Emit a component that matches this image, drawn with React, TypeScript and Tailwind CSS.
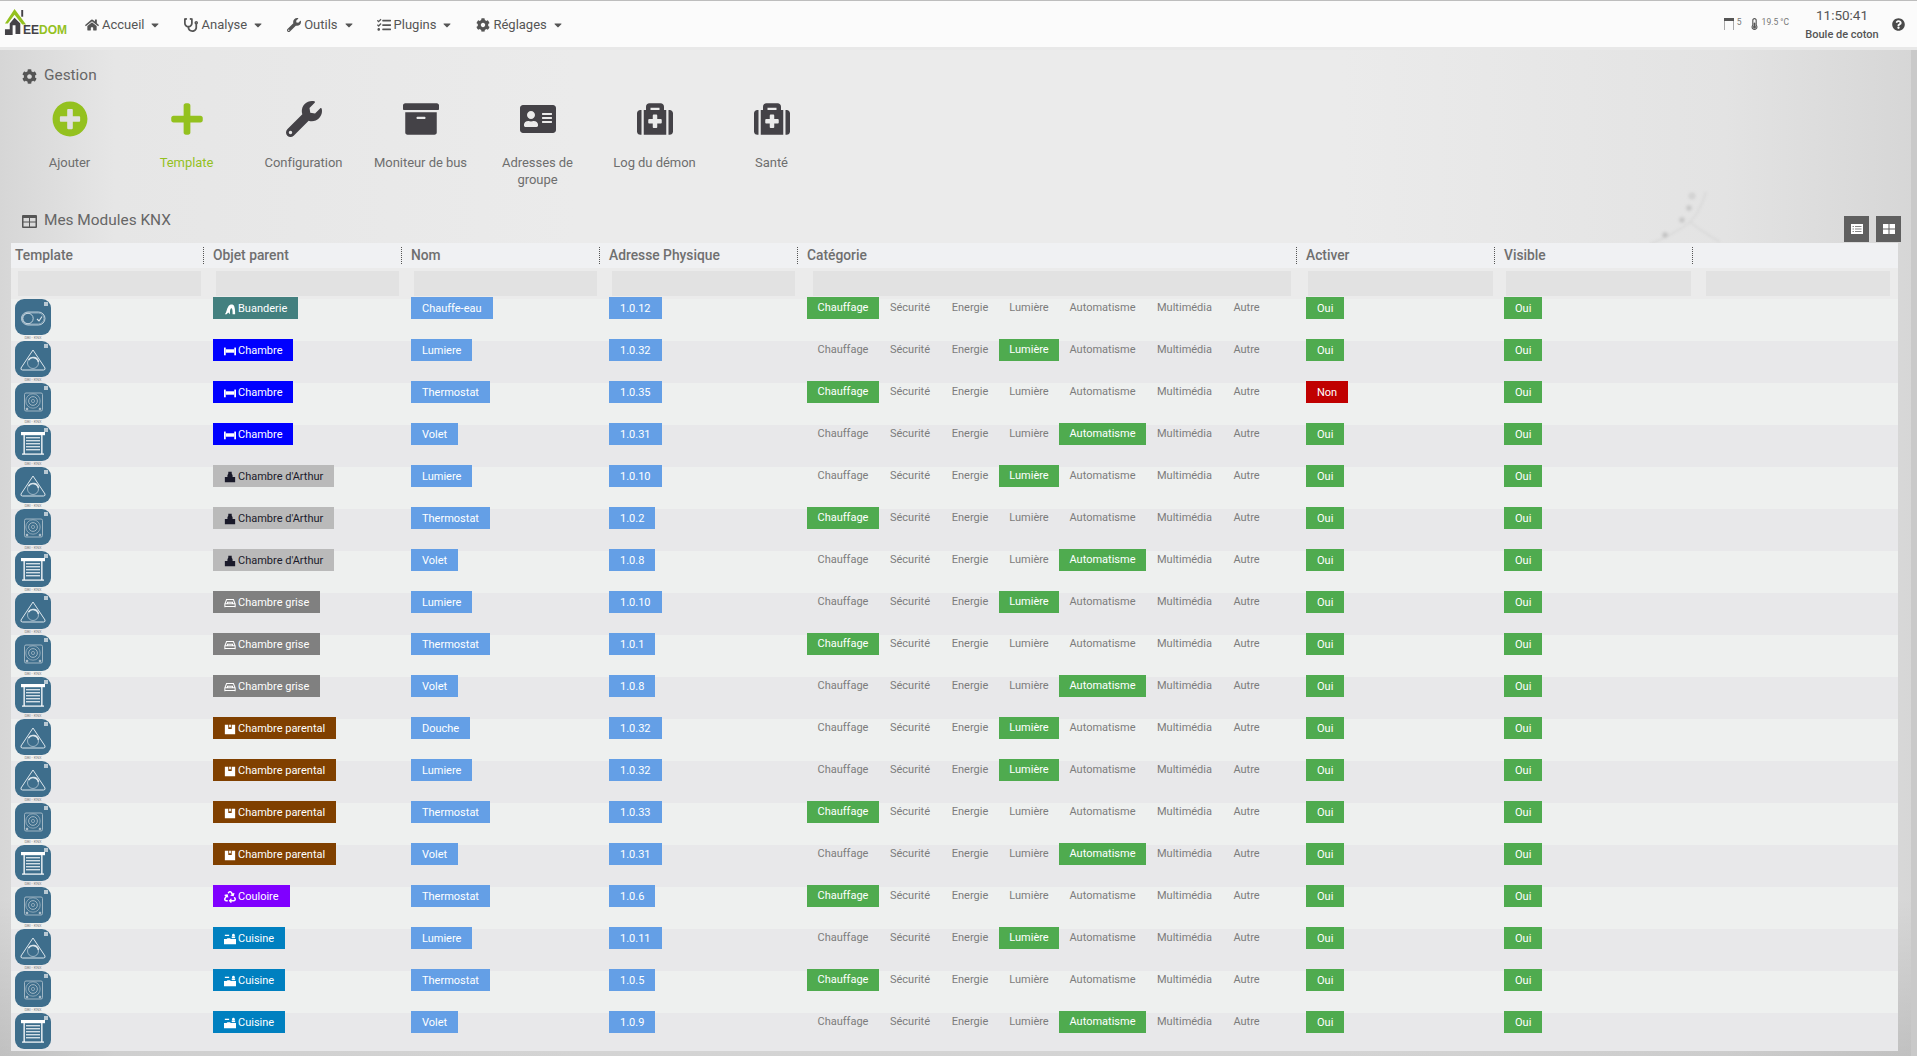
import React from "react";
import {
  FaHome, FaStethoscope, FaWrench, FaTasks, FaCog, FaCaretDown, FaPlusCircle, FaPlus, FaArchive,
  FaAddressCard, FaMedkit, FaQuestionCircle, FaRecycle, FaThermometerHalf,
} from "react-icons/fa";

const NAV = [
  { l: "Accueil", I: FaHome, c: "ml-[20px]" },
  { l: "Analyse", I: FaStethoscope, c: "ml-[24px]" },
  { l: "Outils", I: FaWrench, c: "ml-[24px]" },
  { l: "Plugins", I: FaTasks, c: "ml-[23px]" },
  { l: "Réglages", I: FaCog, c: "ml-[24px]" },
];

const CARDS = [
  { l: "Ajouter", I: FaPlusCircle, c: "text-[#94c11f]" },
  { l: "Template", I: FaPlus, c: "text-[#94c11f]", t: "text-[#94c11f]" },
  { l: "Configuration", I: FaWrench, c: "text-[#444247]" },
  { l: "Moniteur de bus", I: FaArchive, c: "text-[#444247]" },
  { l: "Adresses de groupe", I: FaAddressCard, c: "text-[#444247]" },
  { l: "Log du démon", I: FaMedkit, c: "text-[#444247]" },
  { l: "Santé", I: FaMedkit, c: "text-[#444247]" },
];

const GRID = "grid grid-cols-[198px_198px_198px_198px_499px_198px_198px_200px]";
const COLS = ["Template", "Objet parent", "Nom", "Adresse Physique", "Catégorie", "Activer", "Visible", ""];
const FILTERS = [
  "pl-[7px] pr-[8px]", "pl-[7px] pr-[8px]", "pl-[7px] pr-[8px]", "pl-[7px] pr-[8px]",
  "pl-[10px] pr-[11px]", "pl-[6px] pr-[7px]", "pl-[6px] pr-[7px]", "pl-[8px] pr-[8px]",
];
const CATS = [
  { n: "Chauffage", c: "w-[72px]" },
  { n: "Sécurité", c: "w-[62px]" },
  { n: "Energie", c: "w-[58px]" },
  { n: "Lumière", c: "w-[60px]" },
  { n: "Automatisme", c: "w-[87px]" },
  { n: "Multimédia", c: "w-[77px]" },
  { n: "Autre", c: "w-[47px]" },
];

function BlobWash() {
  return (
    <svg viewBox="0 0 14 14" className="w-[12px] h-[12px]" fill="currentColor">
      <path d="M1 13 C3 11 3 7 5 4 C7 1 11 1 12 4 C13 7 13 10 13 13 L10 13 C10 10 10 7 9 6 C7 6 7 9 7 13 L5 11 L3 13 Z" />
    </svg>
  );
}
function Bar() {
  return (
    <svg viewBox="0 0 14 14" className="w-[12px] h-[12px]" fill="currentColor">
      <rect x="0" y="3" width="2" height="9" />
      <rect x="12" y="3" width="2" height="9" />
      <rect x="2" y="5" width="10" height="4" />
    </svg>
  );
}
function Lock() {
  return (
    <svg viewBox="0 0 14 14" className="w-[12px] h-[12px]" fill="currentColor">
      <path d="M5 1 H9 V3 L10 5 V7 H13 V13 H1 V7 H4 V5 L5 3 Z" />
    </svg>
  );
}
function OutlineBed() {
  return (
    <svg viewBox="0 0 14 14" className="w-[12px] h-[12px]" fill="none" stroke="currentColor" strokeWidth="1.2">
      <path d="M1 12 V8 L3 3 H11 L13 8 V12 M1 8 H13 M1 11 H13 M4 8 V6 H10 V8" />
    </svg>
  );
}
function Parental() {
  return (
    <svg viewBox="0 0 14 14" className="w-[12px] h-[12px]" fill="currentColor">
      <path d="M1 2 H5 V7 H9 V2 H13 V13 H1 Z" />
      <rect x="6" y="2" width="2" height="3" />
    </svg>
  );
}
function Kitchen() {
  return (
    <svg viewBox="0 0 14 14" className="w-[12px] h-[12px]" fill="currentColor">
      <path d="M0 7 L3 7 L4 6 L7 6 L8 7 H14 V13 H0 Z" />
      <rect x="1" y="2" width="5" height="1.5" />
      <circle cx="11" cy="2.5" r="1.6" />
      <rect x="9" y="4" width="4" height="2" />
    </svg>
  );
}

const OBJ: Record<string, { c: string; I: React.ComponentType<any> }> = {
  Buanderie: { c: "bg-[#43807f] text-white", I: BlobWash },
  Chambre: { c: "bg-[#0000ff] text-white", I: Bar },
  "Chambre d'Arthur": { c: "bg-[#bababa] text-[#1a1a2a]", I: Lock },
  "Chambre grise": { c: "bg-[#808080] text-white", I: OutlineBed },
  "Chambre parental": { c: "bg-[#804000] text-white", I: Parental },
  Couloire: { c: "bg-[#8000ff] text-white", I: FaRecycle },
  Cuisine: { c: "bg-[#0080c0] text-white", I: Kitchen },
};

const ROWS: [string, string, string, boolean?][] = [
  ["Buanderie", "Chauffe-eau", "1.0.12"],
  ["Chambre", "Lumiere", "1.0.32"],
  ["Chambre", "Thermostat", "1.0.35", false],
  ["Chambre", "Volet", "1.0.31"],
  ["Chambre d'Arthur", "Lumiere", "1.0.10"],
  ["Chambre d'Arthur", "Thermostat", "1.0.2"],
  ["Chambre d'Arthur", "Volet", "1.0.8"],
  ["Chambre grise", "Lumiere", "1.0.10"],
  ["Chambre grise", "Thermostat", "1.0.1"],
  ["Chambre grise", "Volet", "1.0.8"],
  ["Chambre parental", "Douche", "1.0.32"],
  ["Chambre parental", "Lumiere", "1.0.32"],
  ["Chambre parental", "Thermostat", "1.0.33"],
  ["Chambre parental", "Volet", "1.0.31"],
  ["Couloire", "Thermostat", "1.0.6"],
  ["Cuisine", "Lumiere", "1.0.11"],
  ["Cuisine", "Thermostat", "1.0.5"],
  ["Cuisine", "Volet", "1.0.9"],
];

function catOf(nom: string) {
  if (nom === "Thermostat" || nom === "Chauffe-eau") return "Chauffage";
  if (nom === "Volet") return "Automatisme";
  return "Lumière";
}

function TemplateIcon({ nom, label }: { nom: string; label: boolean }) {
  const s = { fill: "none", stroke: "#dce6ec", strokeWidth: 0.8 };
  return (
    <div className="flex flex-col items-center w-[36px]">
      <div className="relative w-[36px] h-[36px] rounded-[9px] bg-[#3e6e8c]">
        <span className="absolute right-[3px] top-[3px] w-[4px] h-[4px] bg-[#b9c9d3]" />
        <svg viewBox="0 0 36 36" className="w-[36px] h-[36px]">
          {nom === "Chauffe-eau" && (
            <g {...s}>
              <rect x="6.5" y="13" width="23.5" height="13" rx="6.5" />
              <rect x="7.5" y="14" width="21.5" height="11" rx="5.5" strokeWidth="0.5" />
              <circle cx="13" cy="19.5" r="5.2" />
              <path d="M22 20 L24 22 L27 17.5" strokeWidth="1.1" />
            </g>
          )}
          {(nom === "Lumiere" || nom === "Douche") && (
            <g {...s}>
              <path d="M18 9 L30 27 Q30.5 29 28.5 29 H7.5 Q5.5 29 6 27 Z" strokeWidth="1" />
              <circle cx="18" cy="22" r="5.5" strokeWidth="0.6" />
              <path d="M13.5 19 A5.5 5.5 0 0 1 23.5 21" strokeWidth="1.6" />
            </g>
          )}
          {nom === "Thermostat" && (
            <g fill="none" stroke="#a9bcc8" strokeWidth="0.7">
              <rect x="9.5" y="10" width="18" height="18" rx="1.5" strokeWidth="0.9" />
              <circle cx="18" cy="18" r="7.2" />
              <circle cx="18" cy="18" r="4.4" strokeWidth="0.9" />
              <circle cx="18" cy="18" r="1.6" />
              <circle cx="12" cy="26" r="1" fill="#cfd9e0" />
              <circle cx="25" cy="26" r="1" fill="#cfd9e0" />
            </g>
          )}
          {nom === "Volet" && (
            <g fill="#ffffff">
              <rect x="6" y="7" width="24" height="3.2" />
              <rect x="8.5" y="10" width="1.3" height="19" />
              <rect x="26.2" y="10" width="1.3" height="19" />
              <rect x="7" y="28.5" width="22" height="1.2" />
              <rect x="11" y="12" width="14" height="1.4" fill="#d4dfe6" />
              <rect x="11" y="15" width="14" height="1.4" fill="#d4dfe6" />
              <rect x="11" y="18" width="14" height="1.4" fill="#d4dfe6" />
              <rect x="11" y="21" width="14" height="1.4" fill="#d4dfe6" />
              <rect x="11" y="24" width="14" height="1.4" fill="#d4dfe6" />
            </g>
          )}
        </svg>
      </div>
      {label && <span className="text-[4px] leading-[4px] mt-[1px] text-[#888] whitespace-nowrap">DBI - KNX</span>}
    </div>
  );
}

function Badge({ children, className }: { children: React.ReactNode; className: string }) {
  return (
    <span className={`-mt-[2px] pt-[1px] flex items-center h-[22px] px-[11px] text-[11px] font-normal leading-none whitespace-nowrap ${className}`}>
      {children}
    </span>
  );
}

const CELL = "pl-[4px] flex items-start";

export default function App() {
  return (
    <div className="relative h-[1056px] w-[1917px] overflow-hidden font-[family-name:Roboto,sans-serif] text-[#555] bg-[linear-gradient(180deg,transparent_85%,rgba(0,0,0,0.1)_100%),linear-gradient(90deg,#d6d6d6_0%,#e6e6e6_6%,#ebebeb_30%,#ebebeb_70%,#e3e3e3_90%,#d6d6d6_100%)]">
      {/* nav */}
      <header className="h-[50px] border-b-[3px] border-[#e8e8e8] border-t-[1px] border-t-[#bdbdbd] bg-[#fbfbfb] flex items-center">
        <div className="flex items-end self-start mt-[7px] ml-[4px] w-[61px] h-[27px]">
          <svg viewBox="0 0 24 28" className="w-[23px] h-[27px] shrink-0">
            <path d="M1 16 L11 1 L23 17 H19 L11 7 L4 16 Z" fill="#94c11f" />
            <path d="M6 16 L11 10 L17 16 V27 H12 V18 H9 V28 H1 V22 H6 Z" fill="#444247" />
            <rect x="18" y="2" width="2" height="7" fill="#444247" />
          </svg>
          <span className="font-[family-name:'Liberation_Sans',sans-serif] font-bold text-[12px] leading-[10px] -ml-[4px] whitespace-nowrap">
            <span className="text-[#444247]">EE</span>
            <span className="text-[#94c11f]">DOM</span>
          </span>
        </div>
        {NAV.map(({ l, I, c }) => (
          <div key={l} className={`flex items-center mt-[2px] text-[#555] text-[13px] ${c}`}>
            <I className="w-[14px] h-[14px] mr-[3px]" />
            <span>{l}</span>
            <FaCaretDown className="w-[10px] h-[12px] ml-[6px]" />
          </div>
        ))}
        <div className="ml-auto flex items-center">
          <div className="flex items-center mr-[17px]">
            <svg viewBox="0 0 10 12" className="w-[10px] h-[12px]">
              <rect x="0" y="0" width="10" height="3" fill="#555" />
              <rect x="0" y="3" width="1" height="9" fill="#aaa" />
              <rect x="9" y="3" width="1" height="9" fill="#aaa" />
            </svg>
            <span className="text-[8.5px] leading-none ml-[3px] -mt-[4px] text-[#777]">5</span>
            <FaThermometerHalf className="w-[9px] h-[12px] ml-[8px] text-[#555]" />
            <span className="text-[8.5px] leading-none ml-[3px] -mt-[4px] text-[#777] whitespace-nowrap">19.5 °C</span>
          </div>
          <div className="flex flex-col items-center w-[72px]">
            <span className="text-[13.5px] leading-[18px] text-[#555]">11:50:41</span>
            <span className="text-[11px] leading-[16px] mt-[3px] font-medium text-[#555] whitespace-nowrap">Boule de coton</span>
          </div>
          <FaQuestionCircle className="w-[13px] h-[13px] ml-[14px] mr-[12px] text-[#4a4a4a]" />
        </div>
      </header>

      <main className="pl-[11px]">
        <h2 className="flex items-center h-[22px] mt-[15px] pl-[11px] text-[15.4px] font-normal text-[#666]">
          <FaCog className="w-[15px] h-[15px] text-[#555] mr-[7px]" />
          Gestion
        </h2>
        <div className="flex h-[109px] mt-[13px]">
          {CARDS.map(({ l, I, c, t }) => (
            <div key={l} className="w-[117px] flex flex-col items-center">
              <div className="h-[38px] flex items-center justify-center">
                <I className={`${c} w-[36px] h-[36px]`} />
              </div>
              <span className={`mt-[16px] w-[90px] text-center text-[13px] tracking-[-0.05px] leading-[17px] ${t ?? "text-[#6e6e6e]"} ${l.length < 16 ? "whitespace-nowrap flex justify-center" : ""}`}>
                {l}
              </span>
            </div>
          ))}
        </div>
        <div className="flex justify-between h-[34px] w-[1890px]">
          <h2 className="flex items-center h-[22px] mt-[1px] pl-[11px] text-[15.4px] font-normal text-[#666]">
            <svg viewBox="0 0 15 13" className="w-[15px] h-[13px] mr-[7px]" fill="#555">
              <path d="M0 1 Q0 0 1 0 H14 Q15 0 15 1 V12 Q15 13 14 13 H1 Q0 13 0 12 Z M1.5 3 V6.5 H7 V3 Z M8 3 V6.5 H13.5 V3 Z M1.5 7.5 V11.5 H7 V7.5 Z M8 7.5 V11.5 H13.5 V7.5 Z" fillRule="evenodd" />
            </svg>
            Mes Modules KNX
          </h2>
          <div className="flex gap-[7px] mt-[7px]">
            <div className="w-[25px] h-[26px] bg-[#5f5f5f] flex items-center justify-center">
              <svg viewBox="0 0 12 10" className="w-[12px] h-[10px]">
                <rect width="12" height="10" fill="#fff" />
                <rect x="1.5" y="2" width="1.5" height="1" fill="#888" />
                <rect x="1.5" y="4.5" width="1.5" height="1" fill="#888" />
                <rect x="1.5" y="7" width="1.5" height="1" fill="#888" />
                <rect x="4" y="2" width="6.5" height="1" fill="#888" />
                <rect x="4" y="4.5" width="6.5" height="1" fill="#888" />
                <rect x="4" y="7" width="6.5" height="1" fill="#888" />
              </svg>
            </div>
            <div className="w-[25px] h-[26px] bg-[#5f5f5f] flex items-center justify-center">
              <svg viewBox="0 0 12 10" className="w-[12px] h-[10px]" fill="#fff">
                <rect width="5.5" height="4.5" />
                <rect x="6.5" width="5.5" height="4.5" />
                <rect y="5.5" width="5.5" height="4.5" />
                <rect x="6.5" y="5.5" width="5.5" height="4.5" />
              </svg>
            </div>
          </div>
        </div>

        <div className="relative z-10 w-[1887px] h-[808px] overflow-hidden">
          <div className={`${GRID} h-[25px] bg-[#f0f1f3]`}>
            {COLS.map((c, i) => (
              <div key={i} className="pl-[4px] text-[13.8px] font-medium text-[#6f6f6f] flex items-center relative">
                {c}
                {i < 7 && <span className="absolute right-[5px] top-[4px] h-[17px] border-r border-dotted border-[#555]" />}
              </div>
            ))}
          </div>
          <div className={`${GRID} h-[31px] bg-[#ebebeb]`}>
            {FILTERS.map((f, i) => (
              <div key={i} className={`${f} pt-[3px]`}>
                <div className="h-[25px] bg-[#e2e2e2]" />
              </div>
            ))}
          </div>
          {ROWS.map(([obj, nom, addr, active], r) => {
            const O = OBJ[obj];
            const cat = catOf(nom);
            return (
              <div key={r} className={`${GRID} h-[42px] ${r % 2 === 0 ? "bg-[#eef0ef]" : "bg-[#e8e8ea]"}`}>
                <div className={CELL}>
                  <TemplateIcon nom={nom} label={r < ROWS.length - 1} />
                </div>
                <div className={CELL}>
                  <Badge className={`${O.c} gap-[2px]`}>
                    <O.I className="w-[12px] h-[12px]" />
                    {obj}
                  </Badge>
                </div>
                <div className={CELL}>
                  <Badge className="bg-[#649fe6] text-white">{nom}</Badge>
                </div>
                <div className={CELL}>
                  <Badge className="bg-[#649fe6] text-white">{addr}</Badge>
                </div>
                <div className={CELL}>
                  {CATS.map((k) =>
                    k.n === cat ? (
                      <span key={k.n} className={`${k.c} h-[22px] -mt-[2px] pt-[1px] bg-[#4fab4f] text-white text-[11px] flex items-center justify-center`}>
                        {k.n}
                      </span>
                    ) : (
                      <span key={k.n} className={`${k.c} h-[22px] -mt-[2px] pt-[1px] text-[#7c7c7c] text-[11px] flex items-center justify-center`}>
                        {k.n}
                      </span>
                    )
                  )}
                </div>
                <div className={CELL}>
                  {active === false ? (
                    <Badge className="bg-[#c00000] text-white">Non</Badge>
                  ) : (
                    <Badge className="bg-[#4fab4f] text-white">Oui</Badge>
                  )}
                </div>
                <div className={CELL}>
                  <Badge className="bg-[#4fab4f] text-white">Oui</Badge>
                </div>
                <div />
              </div>
            );
          })}
        </div>
      </main>

      {/* decorative backdrop */}
      <svg viewBox="0 0 140 70" className="absolute left-[1640px] top-[180px] w-[140px] h-[70px] blur-[1.5px] opacity-40 pointer-events-none" fill="none" stroke="#aaa">
        <path d="M10 64 C25 58 40 50 50 42 C58 34 62 24 66 12" />
        <path d="M50 42 C60 50 70 56 80 62" />
        <circle cx="25" cy="55" r="2.5" fill="#888" />
        <circle cx="42" cy="40" r="2.5" fill="#999" />
        <circle cx="49" cy="28" r="2.5" fill="#999" />
        <circle cx="52" cy="16" r="3" fill="#bbb" />
      </svg>
      <div className="absolute right-0 top-[50px] bottom-0 w-[6px] bg-[#c9c9c9]" />
    </div>
  );
}
